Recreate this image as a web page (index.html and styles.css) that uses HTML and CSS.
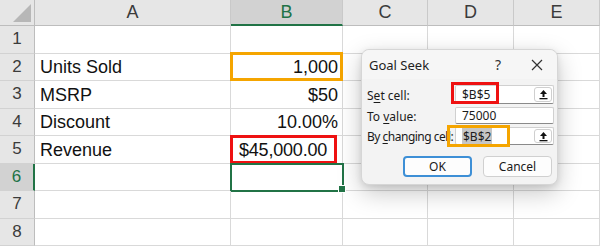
FILE: index.html
```html
<!DOCTYPE html>
<html lang="en">
<head>
    <meta charset="UTF-8">
    <title>Goal Seek</title>
    <link rel="stylesheet" href="styles.css">
</head>
<body>
    <div class="sheet">
        <div class="row head-row">
            <div class="rh corner"><span class="tri"></span></div>
            <div class="ch col-a">A</div>
            <div class="ch col-b active">B</div>
            <div class="ch col-c">C</div>
            <div class="ch col-d">D</div>
            <div class="ch col-e">E</div>
        </div>
        <div class="row">
            <div class="rh">1</div>
            <div class="cell col-a"></div><div class="cell col-b"></div><div class="cell col-c"></div><div class="cell col-d"></div><div class="cell col-e"></div>
        </div>
        <div class="row">
            <div class="rh">2</div>
            <div class="cell col-a">Units Sold</div>
            <div class="cell col-b num mark-orange">1,000</div>
            <div class="cell col-c"></div><div class="cell col-d"></div><div class="cell col-e"></div>
        </div>
        <div class="row">
            <div class="rh">3</div>
            <div class="cell col-a">MSRP</div>
            <div class="cell col-b num">$50</div>
            <div class="cell col-c"></div><div class="cell col-d"></div><div class="cell col-e"></div>
        </div>
        <div class="row">
            <div class="rh">4</div>
            <div class="cell col-a">Discount</div>
            <div class="cell col-b num">10.00%</div>
            <div class="cell col-c"></div><div class="cell col-d"></div><div class="cell col-e"></div>
        </div>
        <div class="row">
            <div class="rh">5</div>
            <div class="cell col-a">Revenue</div>
            <div class="cell col-b num mark-red"><span class="money">$45,000.00</span></div>
            <div class="cell col-c"></div><div class="cell col-d"></div><div class="cell col-e"></div>
        </div>
        <div class="row">
            <div class="rh active">6</div>
            <div class="cell col-a"></div>
            <div class="cell col-b selected"><span class="handle"></span></div>
            <div class="cell col-c"></div><div class="cell col-d"></div><div class="cell col-e"></div>
        </div>
        <div class="row">
            <div class="rh">7</div>
            <div class="cell col-a"></div><div class="cell col-b"></div><div class="cell col-c"></div><div class="cell col-d"></div><div class="cell col-e"></div>
        </div>
        <div class="row">
            <div class="rh">8</div>
            <div class="cell col-a"></div><div class="cell col-b"></div><div class="cell col-c"></div><div class="cell col-d"></div><div class="cell col-e"></div>
        </div>
    </div>

    <div class="dialog">
        <div class="dlg-title">
            <span class="dlg-name">Goal Seek</span>
            <span class="dlg-help">?</span>
            <svg class="dlg-close" width="12" height="12" viewBox="0 0 12 12">
                <path d="M1 1 L11 11 M11 1 L1 11" stroke="#333" stroke-width="1.2" fill="none"/>
            </svg>
        </div>
        <div class="dlg-body">
            <label class="dlg-label">S<u>e</u>t cell:</label>
            <div class="field">
                <span class="val">$B$5</span>
                <span class="ref-btn">
                    <svg width="11" height="11" viewBox="0 0 11 11">
                        <path d="M5.5 1 L9 5 L6.5 5 L6.5 8 L4.5 8 L4.5 5 L2 5 Z" fill="#111"/>
                        <rect x="1.5" y="9" width="8" height="1.3" fill="#111"/>
                    </svg>
                </span>
                <span class="box box-red"></span>
            </div>

            <label class="dlg-label">To <u>v</u>alue:</label>
            <div class="field">
                <span class="val">75000</span>
            </div>

            <label class="dlg-label tight">By <u>c</u>hanging cell:</label>
            <div class="field">
                <span class="val sel">$B$2</span>
                <span class="ref-btn">
                    <svg width="11" height="11" viewBox="0 0 11 11">
                        <path d="M5.5 1 L9 5 L6.5 5 L6.5 8 L4.5 8 L4.5 5 L2 5 Z" fill="#111"/>
                        <rect x="1.5" y="9" width="8" height="1.3" fill="#111"/>
                    </svg>
                </span>
                <span class="box box-orange"></span>
            </div>
        </div>
        <div class="dlg-buttons">
            <button class="btn btn-ok">OK</button>
            <button class="btn">Cancel</button>
        </div>
    </div>
</body>
</html>
```

FILE: styles.css
```css
body {
    margin: 0;
    width: 600px;
    height: 247px;
    overflow: hidden;
    background: #fff;
    font-family: "Liberation Sans", Arial, sans-serif;
    position: relative;
}

.sheet {
    display: flex;
    flex-direction: column;
}

.row {
    display: flex;
    height: 27.5px;
}

.head-row {
    height: 26px;
}

/* row headers */
.rh {
    width: 35px;
    flex: none;
    box-sizing: border-box;
    background: #e6e6e6;
    border-right: 1px solid #bdbdbd;
    border-bottom: 1px solid #d2d2d2;
    display: flex;
    align-items: center;
    justify-content: center;
    font-size: 17px;
    color: #3b3b3b;
}

.rh.active {
    background: #d2d2d2;
    color: #217346;
    border-right: 2px solid #217346;
}

.corner {
    position: relative;
    border-bottom: 1px solid #bdbdbd;
}

.corner .tri {
    position: absolute;
    right: 3px;
    bottom: 3px;
    width: 18px;
    height: 18px;
    background: #b7b7b7;
    clip-path: polygon(100% 0, 100% 100%, 0 100%);
}

/* column headers */
.ch {
    flex: none;
    box-sizing: border-box;
    background: #e6e6e6;
    border-right: 1px solid #c9c9c9;
    border-bottom: 1px solid #bdbdbd;
    display: flex;
    align-items: center;
    justify-content: center;
    font-size: 18px;
    color: #3b3b3b;
}

.ch.active {
    background: #d2d2d2;
    color: #217346;
    border-bottom: 2px solid #217346;
}

.col-a { width: 196px; }
.col-b { width: 112px; }
.col-c { width: 85px; }
.col-d { width: 86px; }
.col-e { width: 86px; }

.cell {
    flex: none;
    box-sizing: border-box;
    border-right: 1px solid #d9d9d9;
    border-bottom: 1px solid #d9d9d9;
    display: flex;
    align-items: center;
    padding: 2px 5px 0 5px;
    font-size: 18px;
    color: #111;
    position: relative;
}

.cell.num {
    justify-content: flex-end;
    padding-right: 4px;
}

.mark-orange::after,
.mark-red::after {
    content: "";
    position: absolute;
    box-sizing: border-box;
}

.mark-orange::after {
    left: -1px;
    top: -2px;
    width: 113px;
    height: 29px;
    border: 3px solid #f5a500;
}

.mark-red::after {
    left: -1px;
    top: -1px;
    width: 107px;
    height: 29px;
    border: 3px solid #ee1111;
}

.cell.mark-red {
    padding-right: 0;
    justify-content: flex-start;
}

.money {
    margin-left: 3px;
    letter-spacing: -0.2px;
}

.selected::after {
    content: "";
    position: absolute;
    left: -1px;
    top: -1px;
    width: 114px;
    height: 29px;
    box-sizing: border-box;
    border: 2px solid #217346;
}

.handle {
    position: absolute;
    right: -4px;
    bottom: -3px;
    width: 6px;
    height: 6px;
    background: #217346;
    border: 1px solid #fff;
    z-index: 2;
}

/* goal seek dialog */
.dialog {
    position: absolute;
    left: 361px;
    top: 49px;
    width: 197px;
    height: 136px;
    box-sizing: border-box;
    background: #f3f3f3;
    border: 1px solid #d6d6d6;
    border-radius: 8px;
    box-shadow: 0 8px 24px rgba(0, 0, 0, 0.22), 0 2px 6px rgba(0, 0, 0, 0.1);
    font-family: "Noto Sans", "Open Sans", sans-serif;
    font-size: 12px;
    color: #1a1a1a;
    display: flex;
    flex-direction: column;
}

.dlg-title {
    height: 29px;
    display: flex;
    align-items: center;
    padding: 0 14px 0 7px;
    background: #f6f6f6;
    border-radius: 8px 8px 0 0;
}

.dlg-name {
    flex: 1;
    font-size: 13px;
    color: #222;
}

.dlg-help {
    font-size: 14px;
    margin-right: 30px;
    color: #333;
}

.dlg-body {
    display: grid;
    grid-template-columns: 88px 99px;
    grid-template-rows: 19px 17px 18px;
    row-gap: 3px;
    padding: 6px 0 0 5px;
    align-items: center;
}

.dlg-label {
    white-space: nowrap;
    padding-top: 1px;
}

.dlg-label u {
    text-underline-offset: 2px;
}

.dlg-label.tight {
    letter-spacing: -0.5px;
}

.field {
    position: relative;
    height: 100%;
    box-sizing: border-box;
    background: #fff;
    border: 1px solid #d0d0d0;
    border-bottom-color: #8a8a8a;
    border-radius: 2px;
    display: flex;
    align-items: center;
    padding-left: 6px;
    font-size: 12px;
}

.val.sel {
    background: #c6c6c6;
    padding: 0 1px;
}

.ref-btn {
    position: absolute;
    right: 1px;
    top: 1px;
    bottom: 1px;
    width: 18px;
    background: #fff;
    border: 1px solid #cfcfcf;
    border-radius: 3px;
    box-sizing: border-box;
    display: flex;
    align-items: center;
    justify-content: center;
}

.box {
    position: absolute;
    box-sizing: border-box;
}

.box-red {
    left: -5px;
    top: -4px;
    width: 48px;
    height: 22px;
    border: 3px solid #ee1111;
}

.box-orange {
    left: -9px;
    top: -3px;
    width: 63px;
    height: 22px;
    border: 3px solid #f5a500;
}

.dlg-buttons {
    display: flex;
    justify-content: flex-end;
    gap: 11px;
    padding: 11px 5px 0 0;
}

.btn {
    width: 69px;
    height: 21px;
    box-sizing: border-box;
    background: #fdfdfd;
    border: 1px solid #d0d0d0;
    border-radius: 4px;
    font-family: "Noto Sans", "Open Sans", sans-serif;
    font-size: 12px;
    color: #1a1a1a;
    padding: 0;
}

.btn-ok {
    border: 2px solid #3d8fd6;
}
```
